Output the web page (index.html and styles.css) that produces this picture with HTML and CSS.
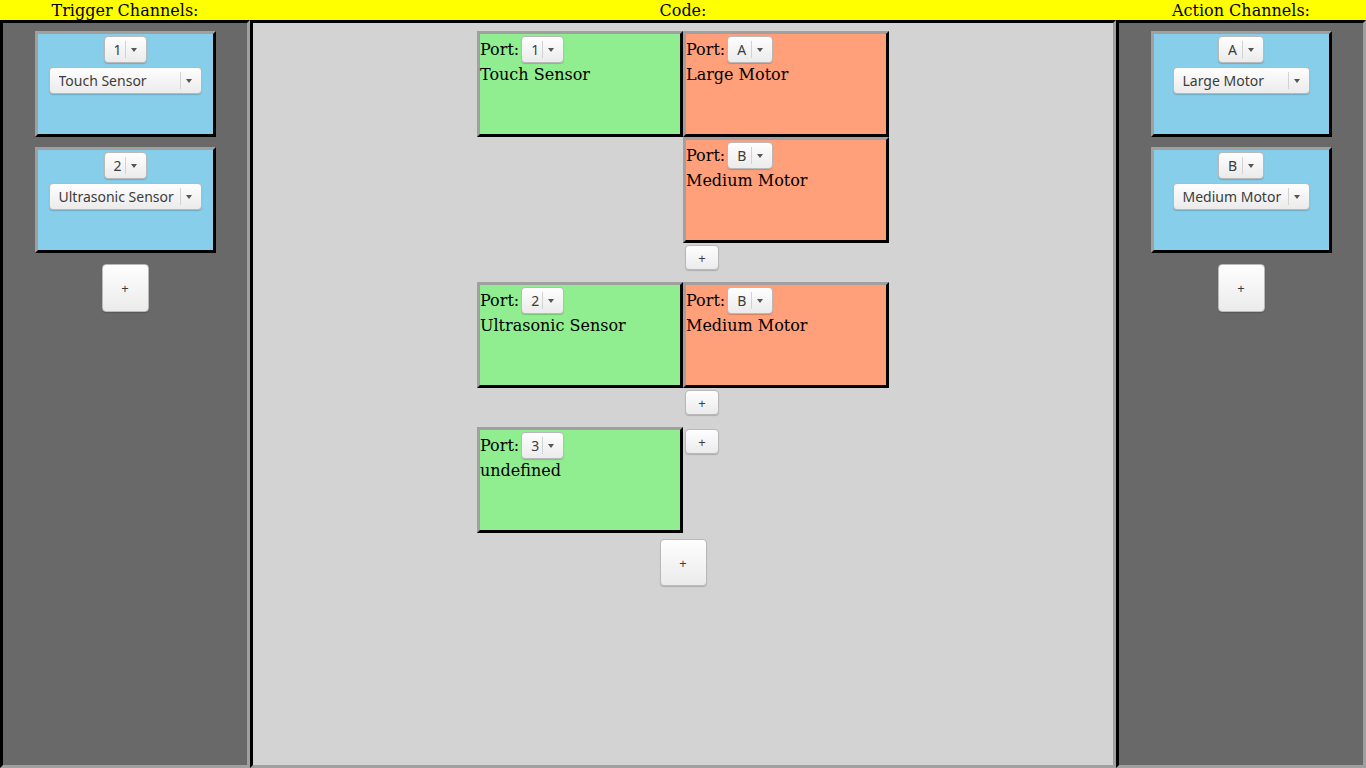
FILE: index.html
```html
<!DOCTYPE html>
<html lang="en">
<head>
    <meta charset="UTF-8">
    <title>Channels</title>
    <link rel="stylesheet" href="styles.css">
</head>
<body>

<div class="headers">
    <div class="head side">Trigger Channels:</div>
    <div class="head middle">Code:</div>
    <div class="head side">Action Channels:</div>
</div>

<div class="workspace">
    <div class="panel channels">
        <div class="channel">
            <span class="dropdown port"><select><option>1</option><option>2</option><option>3</option><option>4</option></select></span>
            <span class="dropdown sensor"><select><option>Touch Sensor</option><option>Ultrasonic Sensor</option></select></span>
        </div>
        <div class="channel">
            <span class="dropdown port"><select><option>2</option><option>1</option><option>3</option><option>4</option></select></span>
            <span class="dropdown sensor"><select><option>Ultrasonic Sensor</option><option>Touch Sensor</option></select></span>
        </div>
        <button class="add">+</button>
    </div>

    <div class="panel code">
        <div class="rules">
            <div class="rule">
                <div class="block trigger">
                    <div class="port-row">Port:<span class="dropdown port"><select><option>1</option></select></span></div>
                    <div class="kind">Touch Sensor</div>
                </div>
                <div class="actions">
                    <div class="block action">
                        <div class="port-row">Port:<span class="dropdown port wide"><select><option>A</option></select></span></div>
                        <div class="kind">Large Motor</div>
                    </div>
                    <div class="block action">
                        <div class="port-row">Port:<span class="dropdown port wide"><select><option>B</option></select></span></div>
                        <div class="kind">Medium Motor</div>
                    </div>
                    <button class="add-small">+</button>
                </div>
            </div>

            <div class="rule">
                <div class="block trigger">
                    <div class="port-row">Port:<span class="dropdown port"><select><option>2</option></select></span></div>
                    <div class="kind">Ultrasonic Sensor</div>
                </div>
                <div class="actions">
                    <div class="block action">
                        <div class="port-row">Port:<span class="dropdown port wide"><select><option>B</option></select></span></div>
                        <div class="kind">Medium Motor</div>
                    </div>
                    <button class="add-small">+</button>
                </div>
            </div>

            <div class="rule">
                <div class="block trigger">
                    <div class="port-row">Port:<span class="dropdown port"><select><option>3</option></select></span></div>
                    <div class="kind">undefined</div>
                </div>
                <div class="actions">
                    <button class="add-small">+</button>
                </div>
            </div>

            <button class="add">+</button>
        </div>
    </div>

    <div class="panel channels">
        <div class="channel">
            <span class="dropdown port wide"><select><option>A</option><option>B</option><option>C</option><option>D</option></select></span>
            <span class="dropdown motor"><select><option>Large Motor</option><option>Medium Motor</option></select></span>
        </div>
        <div class="channel">
            <span class="dropdown port wide"><select><option>B</option><option>A</option><option>C</option><option>D</option></select></span>
            <span class="dropdown motor"><select><option>Medium Motor</option><option>Large Motor</option></select></span>
        </div>
        <button class="add">+</button>
    </div>
</div>

</body>
</html>
```

FILE: styles.css
```css
body {
    margin: 0;
    height: 768px;
    display: flex;
    flex-direction: column;
    overflow: hidden;
    font-family: "DejaVu Serif", serif;
    font-size: 16px;
    color: #000000;
}
.headers {
    display: flex;
    height: 20px;
    overflow: hidden;
    background-color: #ffff00;
}
.head {
    text-align: center;
    line-height: 22px;
}
.head.side {
    width: 250px;
}
.head.middle {
    flex: 1;
}
.workspace {
    flex: 1;
    display: flex;
}
/* bordures en creux pour les panneaux */
.panel {
    box-sizing: border-box;
    border: 3px solid;
    border-color: #000000 #a0a0a0 #a0a0a0 #000000;
    padding-top: 8px;
}
.channels {
    width: 250px;
    background-color: #696969;
    display: flex;
    flex-direction: column;
    align-items: center;
}
.code {
    flex: 1;
    background-color: #d3d3d3;
}
/* bordures en relief pour les blocs */
.channel,
.block {
    box-sizing: border-box;
    height: 106px;
    border: 3px solid;
    border-color: #a0a0a0 #000000 #000000 #a0a0a0;
}
.channel {
    width: 181px;
    background-color: #87ceeb;
    margin-bottom: 10px;
    padding-top: 2px;
    display: flex;
    flex-direction: column;
    align-items: center;
    gap: 4px;
}
.dropdown {
    position: relative;
    display: inline-block;
    height: 27px;
    width: 153px;
}
.dropdown.port {
    width: 43px;
}
.dropdown.port.wide {
    width: 46px;
}
.dropdown.motor {
    width: 137px;
}
.dropdown select {
    appearance: none;
    -webkit-appearance: none;
    box-sizing: border-box;
    width: 100%;
    height: 27px;
    margin: 0;
    padding: 0 24px 0 9px;
    border: 1px solid #b9b9b9;
    border-radius: 4px;
    background: linear-gradient(#fefefe, #ebebeb);
    box-shadow: 0 1px 1px rgba(0, 0, 0, 0.18);
    font-family: "Noto Sans", sans-serif;
    font-size: 14px;
    color: #3c3c3c;
    outline: none;
}
.dropdown::before {
    content: "";
    position: absolute;
    right: 21px;
    top: 5px;
    bottom: 5px;
    width: 1px;
    background-color: #d2d2d2;
    pointer-events: none;
}
.dropdown::after {
    content: "";
    position: absolute;
    right: 10px;
    top: 12px;
    border-left: 3.5px solid transparent;
    border-right: 3.5px solid transparent;
    border-top: 4px solid #555555;
    pointer-events: none;
}
.add,
.add-small {
    box-sizing: border-box;
    padding: 0;
    border: 1px solid #b9b9b9;
    border-radius: 4px;
    background: linear-gradient(#fefefe, #ebebeb);
    box-shadow: 0 1px 1px rgba(0, 0, 0, 0.18);
    font-family: "Noto Sans", sans-serif;
    font-size: 13px;
    color: #3c3c3c;
    cursor: pointer;
}
.add {
    width: 47px;
    height: 48px;
    margin-top: 1px;
}
.rules {
    display: flex;
    flex-direction: column;
    align-items: center;
    gap: 6px;
}
.rules .add {
    width: 47px;
    height: 47px;
    margin-top: 0;
}
.rule {
    display: grid;
    grid-template-columns: 206px 206px;
    align-items: start;
}
.actions {
    display: flex;
    flex-direction: column;
    align-items: flex-start;
}
.block {
    width: 206px;
}
.trigger {
    background-color: #90ee90;
}
.action {
    background-color: #ffa07a;
}
.port-row {
    display: flex;
    align-items: center;
    gap: 2px;
    height: 31px;
}
.kind {
    line-height: 19px;
}
.add-small {
    width: 34px;
    height: 25px;
    margin: 2px 0 6px 2px;
}
```
